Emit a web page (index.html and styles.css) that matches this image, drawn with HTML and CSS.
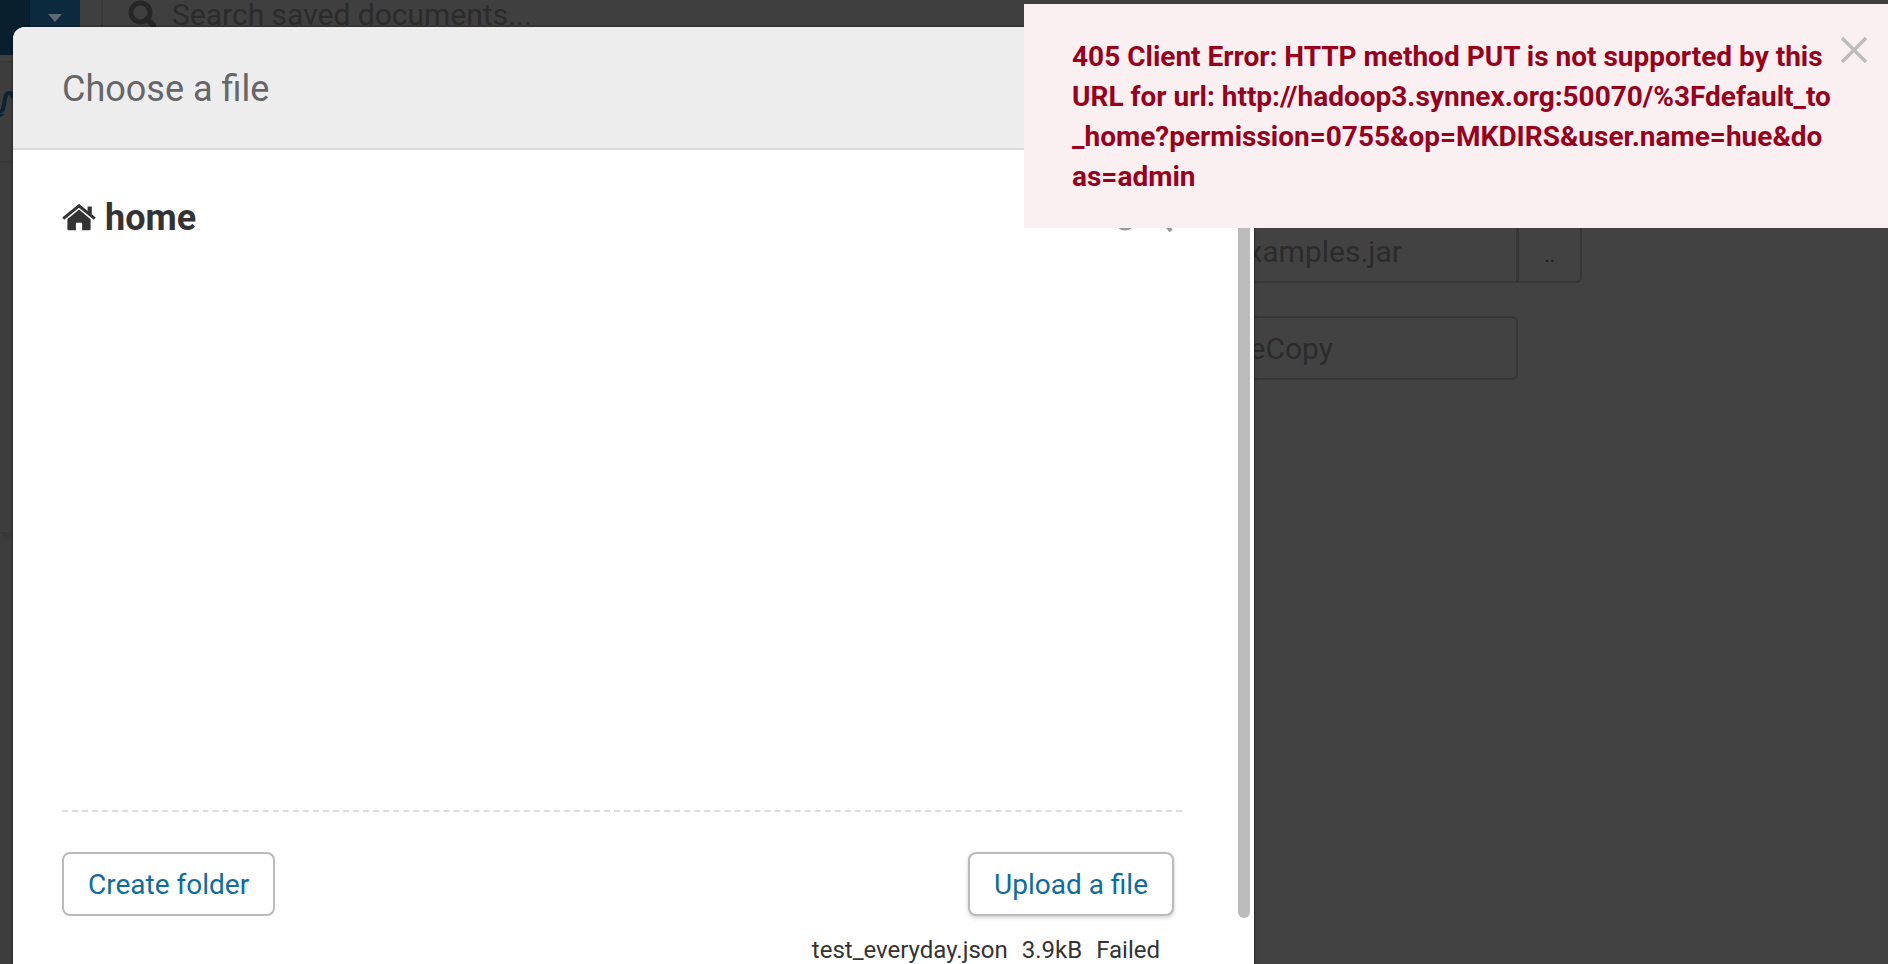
FILE: index.html
```html
<!DOCTYPE html>
<html lang="en">
<head>
<meta charset="utf-8">
<title>Choose a file</title>
<link rel="stylesheet" href="styles.css">
</head>
<body>
<div class="page">
  <header class="topbar">
    <div class="brand">
      <div class="brand-main"></div>
      <div class="brand-caret"><span class="caret"></span></div>
    </div>
    <div class="search">
      <svg class="search-icon" viewBox="0 0 28 28"><circle cx="12.5" cy="12.5" r="9.5" fill="none" stroke="#262626" stroke-width="5"/><path d="M19 19l7 7" stroke="#262626" stroke-width="5.5" stroke-linecap="round"/></svg>
      <span class="search-text">Search saved documents...</span>
    </div>
  </header>
  <div class="main">
    <aside class="side">
      <div class="side-row">
        <svg class="squiggle" viewBox="0 0 13 32"><path d="M-2 22c4 2 5-1 6-6s1-12 5-12 3 3 4 5" fill="none" stroke="#0b2233" stroke-width="4"/><path d="M0 25h5l-5 3z" fill="#0b2233"/></svg>
      </div>
      <div class="side-fold"></div>
    </aside>
    <form class="bg-form">
      <div class="field-group">
        <div class="field field-joined"><span class="field-text">examples.jar</span></div>
        <div class="field-btn">..</div>
      </div>
      <div class="field field-single"><span class="field-text">eCopy</span></div>
    </form>
  </div>
</div>

<div class="modal">
  <div class="modal-header"><h3 class="modal-title">Choose a file</h3></div>
  <div class="modal-body">
    <div class="crumbs">
      <h4 class="crumb">
        <svg class="home-icon" viewBox="0 0 34 28"><path d="M17 5.6 5.4 15.2V25a1.3 1.3 0 0 0 1.3 1.3h7.2v-7.6h6.2v7.6h7.2a1.3 1.3 0 0 0 1.3-1.3v-9.8z" fill="#333"/><path d="M1.2 14.6 17 1.8l15.8 12.8" fill="none" stroke="#333" stroke-width="3"/><path d="M25.6 2.4h4.2v8.4l-4.2-3.4z" fill="#333"/></svg>
        home
      </h4>
      <div class="crumb-tools">
        <svg class="tool" viewBox="0 0 24 24"><circle cx="12" cy="12" r="9" fill="none" stroke="#999" stroke-width="3"/></svg>
        <svg class="tool" viewBox="0 0 24 24"><path d="M13 14l7 9" stroke="#999" stroke-width="4"/></svg>
      </div>
    </div>
    <div class="listing"></div>
    <div class="actions">
      <button class="btn" type="button">Create folder</button>
      <button class="btn btn-raised" type="button">Upload a file</button>
    </div>
    <div class="upload-status"><span>test_everyday.json</span><span>3.9kB</span><span>Failed</span></div>
  </div>
  <div class="scrollbar"></div>
</div>

<div class="alert">
  <p class="alert-text">405 Client Error: HTTP method PUT is not supported by this URL for url: http://hadoop3.synnex.org:50070/%3Fdefault_to_home?permission=0755&amp;op=MKDIRS&amp;user.name=hue&amp;doas=admin</p>
  <svg class="alert-close" viewBox="0 0 28 28"><path d="M2 2l24 24M26 2 2 26" stroke="#bcbcbc" stroke-width="3.4"/></svg>
</div>
</body>
</html>
```
FILE: styles.css
```css
* { box-sizing: border-box; }
html, body { margin: 0; height: 100%; }
body {
  width: 1888px;
  height: 964px;
  overflow: hidden;
  background: #424242;
  font-family: Roboto, "Liberation Sans", sans-serif;
  position: relative;
}
.page { width: 100%; height: 100%; display: flex; flex-direction: column; }

.topbar { display: flex; height: 63px; border-bottom: 2px solid #383838; background: #3f3f3f; }
.brand { display: flex; width: 80px; height: 55px; background: #0a1f2d; }
.brand-main { width: 30px; border-right: 1px solid #0a1c28; flex: none; }
.brand-caret { flex: 1; background: #0c2a3d; display: flex; justify-content: center; padding-top: 14px; }
.caret { width: 0; height: 0; border-left: 7px solid transparent; border-right: 7px solid transparent; border-top: 8px solid #5e6a72; }
.search { flex: 1; margin-left: 21px; padding: 0 0 0 25px; display: flex; gap: 16px; height: 30px; border-left: 2px solid #383838; }
.search-icon { width: 28px; height: 28px; flex: none; }
.search-text { font-size: 30px; line-height: 30px; color: #2b2b2b; white-space: nowrap; }

.main { flex: 1; display: flex; }
.side { width: 13px; background: #3d3d3d; }
.side-row { height: 100px; border-bottom: 2px solid #383838; padding-top: 26px; }
.squiggle { display: block; width: 13px; height: 32px; }
.side-fold { width: 0; height: 0; margin-top: 369px; border-left: 7px solid transparent; border-right: 7px solid transparent; border-top: 8px solid #383838; }

.bg-form { flex: none; margin-left: 900px; padding-top: 157px; display: flex; flex-direction: column; gap: 33px; width: 669px; }
.field-group { display: flex; height: 63px; }
.field { flex: none; width: 605px; height: 63px; border: 2px solid #363636; border-radius: 6px; display: flex; align-items: center; justify-content: flex-end; }
.field-joined { border-radius: 6px 0 0 6px; padding-right: 114px; }
.field-single { height: 64px; padding-right: 183px; }
.field-text { font-size: 30px; color: #2b2b2b; white-space: nowrap; }
.field-btn { width: 65px; flex: none; height: 63px; margin-left: -1px; border: 2px solid #363636; border-radius: 0 6px 6px 0; color: #0a2233; font-size: 20px; text-align: center; line-height: 66px; font-weight: 400; }

.modal {
  position: absolute;
  left: 13px;
  top: 27px;
  width: 1241px;
  height: 960px;
  background: #fff;
  border-radius: 12px 0 0 0;
  box-shadow: 0 0 2px 1px rgba(0, 0, 0, .35);
  overflow: hidden;
}
.modal-header { height: 123px; background: #eeedee; border-bottom: 2px solid #d9d9d9; padding: 41px 49px 0; }
.modal-title { margin: 0; font-size: 36px; line-height: 42px; font-weight: 400; color: #666; }
.modal-body { padding: 48px 72px 0 49px; height: 837px; display: flex; flex-direction: column; }
.crumbs { display: flex; justify-content: space-between; align-items: flex-start; height: 40px; flex: none; }
.crumb { margin: 0; display: flex; align-items: center; gap: 9px; font-size: 36px; line-height: 40px; font-weight: 700; color: #333; }
.home-icon { width: 34px; height: 28px; }
.crumb-tools { display: flex; gap: 14px; padding: 10px 7px 0 0; }
.tool { width: 24px; height: 24px; }
.listing { flex: none; height: 574px; border-bottom: 2px dashed #ddd; }
.actions { flex: none; display: flex; justify-content: space-between; padding: 40px 8px 0 0; }
.btn { height: 64px; padding: 0 24px; background: #fff; border: 2px solid #bbb; border-radius: 8px; color: #0e6c9f; font: 400 28px Roboto, "Liberation Sans", sans-serif; }
.btn-raised { box-shadow: 0 2px 4px rgba(0, 0, 0, .18); }
.upload-status { flex: none; display: flex; justify-content: flex-end; gap: 14px; padding: 19px 22px 0 0; font-size: 24px; line-height: 30px; color: #333; }

.scrollbar { position: absolute; left: 1225px; top: 0; width: 12px; height: 891px; background: #bcbcbc; border-radius: 0 0 6px 6px; }

.alert {
  position: absolute;
  left: 1024px;
  top: 4px;
  width: 864px;
  height: 224px;
  background: #faf0f1;
  padding: 33px 0 0 48px;
}
.alert-text { margin: 0; width: 762px; font-size: 28px; line-height: 40px; font-weight: 700; color: #99001c; word-break: break-all; }
.alert-close { position: absolute; left: 816px; top: 32px; width: 28px; height: 28px; }
```
